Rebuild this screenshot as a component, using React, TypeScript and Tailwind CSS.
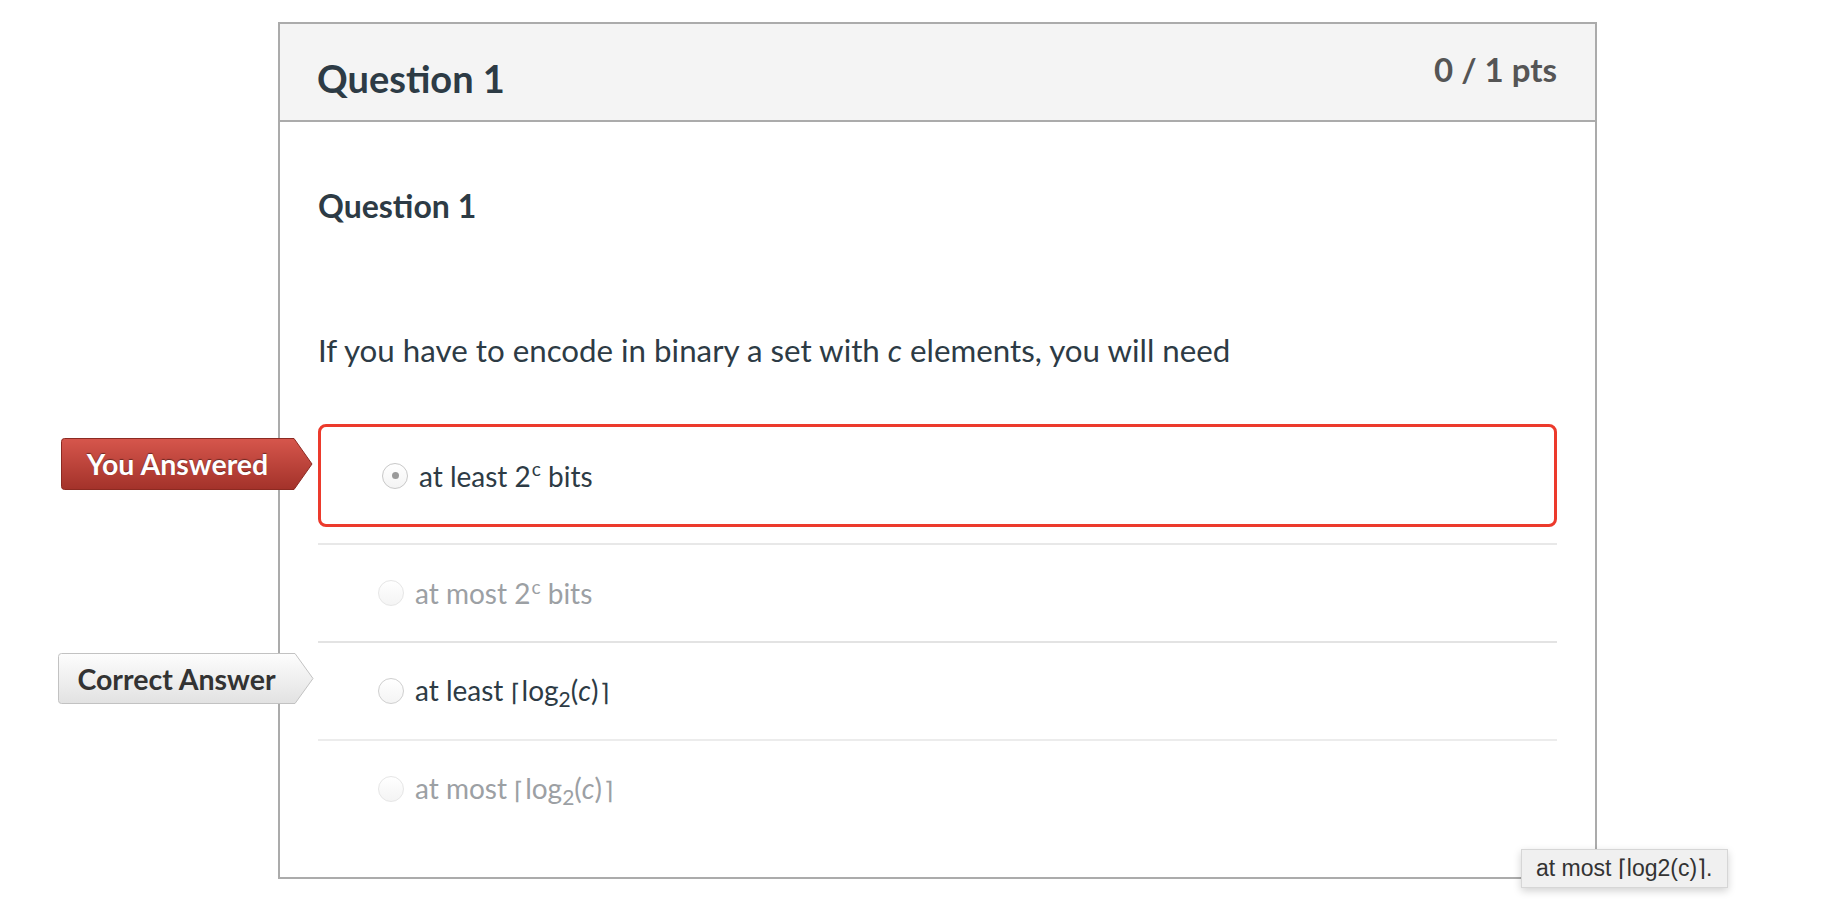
import React from 'react';

type Tone = 'selected' | 'muted' | 'correct';

function Radio({ tone }: { tone: Tone }) {
  const ring =
    tone === 'muted' ? 'border-[#e6e6e6]' : tone === 'correct' ? 'border-[#cfcfcf]' : 'border-[#c8c8c8]';
  return (
    <span
      className={`flex h-[26px] w-[26px] shrink-0 items-center justify-center rounded-full border bg-gradient-to-b from-white to-[#f4f4f4] ${ring}`}
    >
      {tone === 'selected' && <span className="h-[7px] w-[7px] rounded-full bg-[#9a9a9a]" />}
    </span>
  );
}

function Tag({ kind }: { kind: 'you' | 'correct' }) {
  const you = kind === 'you';
  const w = you ? 252 : 256;
  const body = w - 19;
  const h = you ? 52 : 51;
  const id = you ? 'gYou' : 'gCorrect';
  return (
    <div className="relative flex items-center" style={{ width: w, height: h }}>
      <svg className="absolute inset-0" width={w} height={h} viewBox={`0 0 ${w} ${h}`}>
        <defs>
          <linearGradient id={id} x1="0" y1="0" x2="0" y2="1">
            <stop offset="0" stopColor={you ? '#d6564c' : '#fdfdfd'} />
            <stop offset="1" stopColor={you ? '#a3322a' : '#e2e2e2'} />
          </linearGradient>
        </defs>
        <path
          d={`M3.5 0.5 H${body} L${w - 1} ${h / 2} L${body} ${h - 0.5} H3.5 Q0.5 ${h - 0.5} 0.5 ${h - 3.5} V3.5 Q0.5 0.5 3.5 0.5 Z`}
          fill={`url(#${id})`}
          stroke={you ? '#8c2a22' : '#c2c2c2'}
          strokeWidth="1"
        />
      </svg>
      <span
        className={`relative flex items-center justify-center text-[28.5px] font-bold leading-none ${
          you ? 'text-white [text-shadow:0_-1px_1px_rgba(0,0,0,0.45)]' : 'text-[#333]'
        }`}
        style={{ width: body }}
      >
        {you ? 'You Answered' : 'Correct Answer'}
      </span>
    </div>
  );
}

function Ceil({ children }: { children: React.ReactNode }) {
  return (
    <span>
      <span className="mr-[2px] font-['DejaVu_Sans'] text-[0.85em] font-extralight">⌈</span>
      {children}
      <span className="ml-[2px] font-['DejaVu_Sans'] text-[0.85em] font-extralight">⌉</span>
    </span>
  );
}

function LogC() {
  return (
    <Ceil>
      log<sub className="text-[0.75em]">2</sub>(<i>c</i>)
    </Ceil>
  );
}

function Pow() {
  return (
    <>
      2<sup className="ml-[1px] text-[0.68em] -top-[0.55em]">c</sup> bits
    </>
  );
}

export default function App() {
  return (
    <div className="relative min-h-[908px] bg-white pt-[22px] font-['Lato','Noto_Sans',sans-serif]">
      <div className="ml-[278px] w-[1319px] border-2 border-[#ababab] bg-white">
        {/* header */}
        <div className="flex h-[98px] items-start justify-between border-b-2 border-[#ababab] bg-[#f4f4f4] pl-[37px] pr-[38px]">
          <h1 className="pt-[35px] text-[38px] font-bold leading-none text-[#2d3b45]">Question 1</h1>
          <div className="pt-[29px] text-[33px] font-bold leading-none text-[#555]">0 / 1 pts</div>
        </div>

        {/* body */}
        <div className="px-[38px] pb-[40px]">
          <h2 className="pt-[68px] text-[32px] font-bold leading-none text-[#2d3b45]">Question 1</h2>
          <p className="mt-[113px] text-[31.3px] leading-none text-[#2d3b45]">
            If you have to encode in binary a set with <i>c</i> elements, you will need
          </p>

          <div className="mt-[58px]">
            <div className="relative flex h-[103px] items-center rounded-[8px] border-[3px] border-[#ec3a2c] pl-[61px]">
              <div className="absolute left-[-260px] top-[11px]">
                <Tag kind="you" />
              </div>
              <Radio tone="selected" />
              <span className="ml-[11px] text-[28px] leading-none text-[#2d3b45]">
                at least <Pow />
              </span>
            </div>

            <div className="mt-[16px] flex h-[98px] items-center border-t-2 border-[#e8e8e8] pl-[60px]">
              <Radio tone="muted" />
              <span className="ml-[11px] text-[28px] leading-none text-[#9ca0a4]">
                at most <Pow />
              </span>
            </div>

            <div className="relative flex h-[98px] items-center border-t-2 border-[#e3e3e3] pl-[60px]">
              <div className="absolute left-[-260px] top-[10px]">
                <Tag kind="correct" />
              </div>
              <Radio tone="correct" />
              <span className="ml-[11px] text-[28px] leading-none text-[#2d3b45]">
                at least <LogC />
              </span>
            </div>

            <div className="flex h-[98px] items-center border-t-2 border-[#ececec] pl-[60px]">
              <Radio tone="muted" />
              <span className="ml-[11px] text-[28px] leading-none text-[#9ca0a4]">
                at most <LogC />
              </span>
            </div>
          </div>
        </div>
      </div>

      {/* native title tooltip */}
      <div className="absolute left-[1521px] top-[849px] flex h-[39px] items-center border border-[#d6d6d6] bg-[#f0f0f0] px-[14px] font-['Liberation_Sans',sans-serif] text-[23px] leading-none text-[#333] shadow-[0_3px_8px_rgba(0,0,0,0.18)]">
        at most ⌈log2(c)⌉.
      </div>
    </div>
  );
}
